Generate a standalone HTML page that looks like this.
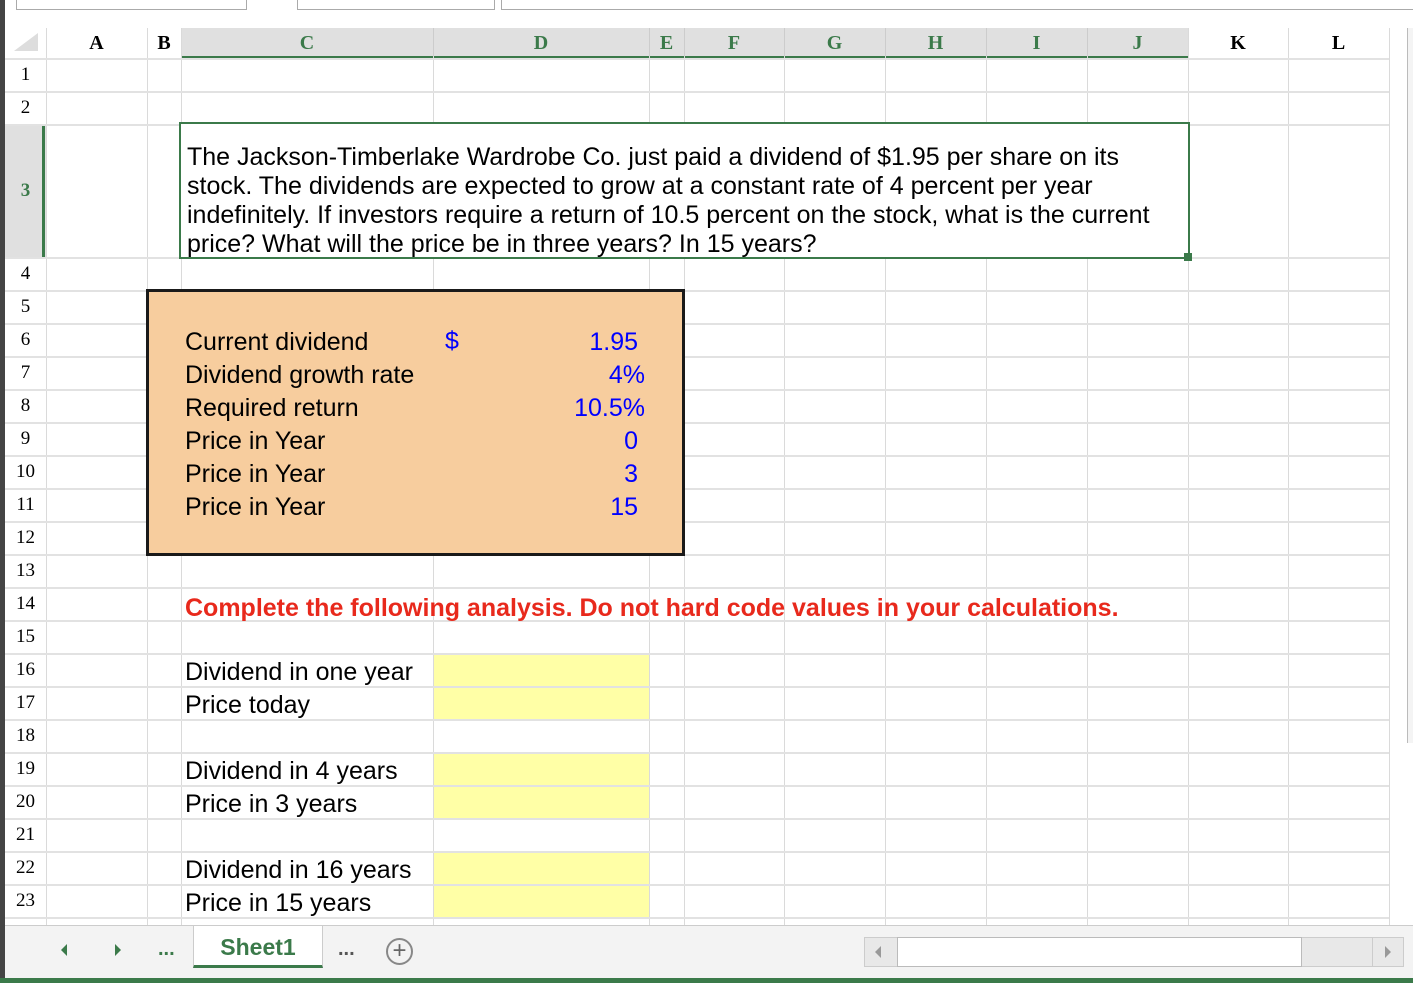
<!DOCTYPE html><html><head><style>
body{margin:0;width:1413px;height:983px;background:#fff;position:relative;overflow:hidden;font-family:"Liberation Sans",Arial,sans-serif}
div{position:absolute;box-sizing:border-box}
.v{width:1px;top:28px;height:897px;background:#dadada}
.h{height:2px;left:5px;width:1384px;background:#e2e2e2}
.ch{top:28px;height:30px;font-family:"Liberation Serif",serif;font-weight:bold;font-size:20px;text-align:center;line-height:30px}
.rh{left:5px;width:41px;text-align:center;font-family:"Liberation Serif",serif;font-size:19px;height:33px;line-height:33px}
.t{font-size:25px;color:#000;white-space:nowrap;line-height:29px}
.b{color:#0000ff}
</style></head><body>
<div style="left:0;top:0;width:5px;height:983px;background:#444"></div>
<div style="left:16px;top:0;width:231px;height:10px;border:1px solid #aaa;border-top:none"></div>
<div style="left:297px;top:0;width:198px;height:10px;border:1px solid #aaa;border-top:none"></div>
<div style="left:501px;top:0;width:912px;height:10px;border:1px solid #aaa;border-top:none;border-right:none"></div>
<div style="left:5px;top:28px;width:1384px;height:30px;background:#fff"></div>
<div style="left:181px;top:28px;width:1007px;height:30px;background:#e0e0e0"></div>
<div style="left:181px;top:56px;width:1007px;height:3px;background:#3b7a4a"></div>
<div style="left:14px;top:33px;width:0;height:0;border-left:24px solid transparent;border-bottom:18px solid #ddd"></div>
<div style="left:5px;top:124px;width:41px;height:133px;background:#e0e0e0"></div>
<div style="left:42px;top:124px;width:3px;height:133px;background:#3b7a4a"></div>
<div style="left:433px;top:653px;width:216px;height:66px;background:#ffffa6"></div>
<div style="left:433px;top:752px;width:216px;height:66px;background:#ffffa6"></div>
<div style="left:433px;top:851px;width:216px;height:66px;background:#ffffa6"></div>
<div class="v" style="left:46px"></div><div class="v" style="left:147px"></div><div class="v" style="left:181px"></div><div class="v" style="left:433px"></div><div class="v" style="left:649px"></div><div class="v" style="left:684px"></div><div class="v" style="left:784px"></div><div class="v" style="left:885px"></div><div class="v" style="left:986px"></div><div class="v" style="left:1087px"></div><div class="v" style="left:1188px"></div><div class="v" style="left:1288px"></div><div class="v" style="left:1389px"></div>
<div class="h" style="top:58px"></div><div class="h" style="top:91px"></div><div class="h" style="top:124px"></div><div class="h" style="top:257px"></div><div class="h" style="top:290px"></div><div class="h" style="top:323px"></div><div class="h" style="top:356px"></div><div class="h" style="top:389px"></div><div class="h" style="top:422px"></div><div class="h" style="top:455px"></div><div class="h" style="top:488px"></div><div class="h" style="top:521px"></div><div class="h" style="top:554px"></div><div class="h" style="top:587px"></div><div class="h" style="top:620px"></div><div class="h" style="top:653px"></div><div class="h" style="top:686px"></div><div class="h" style="top:719px"></div><div class="h" style="top:752px"></div><div class="h" style="top:785px"></div><div class="h" style="top:818px"></div><div class="h" style="top:851px"></div><div class="h" style="top:884px"></div><div class="h" style="top:917px"></div>
<div class="ch" style="left:46px;width:101px">A</div><div class="ch" style="left:147px;width:34px">B</div>
<div class="ch" style="left:181px;width:252px;color:#3b7a4a">C</div><div class="ch" style="left:433px;width:216px;color:#3b7a4a">D</div><div class="ch" style="left:649px;width:35px;color:#3b7a4a">E</div><div class="ch" style="left:684px;width:100px;color:#3b7a4a">F</div><div class="ch" style="left:784px;width:101px;color:#3b7a4a">G</div><div class="ch" style="left:885px;width:101px;color:#3b7a4a">H</div><div class="ch" style="left:986px;width:101px;color:#3b7a4a">I</div><div class="ch" style="left:1087px;width:101px;color:#3b7a4a">J</div><div class="ch" style="left:1188px;width:100px">K</div><div class="ch" style="left:1288px;width:101px">L</div>
<div style="left:433px;top:28px;width:1px;height:28px;background:#ccc"></div><div style="left:649px;top:28px;width:1px;height:28px;background:#ccc"></div><div style="left:684px;top:28px;width:1px;height:28px;background:#ccc"></div><div style="left:784px;top:28px;width:1px;height:28px;background:#ccc"></div><div style="left:885px;top:28px;width:1px;height:28px;background:#ccc"></div><div style="left:986px;top:28px;width:1px;height:28px;background:#ccc"></div><div style="left:1087px;top:28px;width:1px;height:28px;background:#ccc"></div>
<div class="rh" style="top:58px">1</div><div class="rh" style="top:91px">2</div><div class="rh" style="top:124px;height:133px;line-height:133px;color:#3b7a4a;font-weight:bold">3</div>
<div class="rh" style="top:257px">4</div><div class="rh" style="top:290px">5</div><div class="rh" style="top:323px">6</div><div class="rh" style="top:356px">7</div><div class="rh" style="top:389px">8</div><div class="rh" style="top:422px">9</div><div class="rh" style="top:455px">10</div><div class="rh" style="top:488px">11</div><div class="rh" style="top:521px">12</div><div class="rh" style="top:554px">13</div><div class="rh" style="top:587px">14</div><div class="rh" style="top:620px">15</div><div class="rh" style="top:653px">16</div><div class="rh" style="top:686px">17</div><div class="rh" style="top:719px">18</div><div class="rh" style="top:752px">19</div><div class="rh" style="top:785px">20</div><div class="rh" style="top:818px">21</div><div class="rh" style="top:851px">22</div><div class="rh" style="top:884px">23</div>
<div style="left:179px;top:122px;width:1011px;height:137px;border:2px solid #3b7a4a;background:#fff"></div>
<div style="left:1184px;top:253px;width:8px;height:8px;background:#3b7a4a"></div>
<div class="t" style="left:187px;top:143px">The Jackson-Timberlake Wardrobe Co. just paid a dividend of $1.95 per share on its<br>stock. The dividends are expected to grow at a constant rate of 4 percent per year<br>indefinitely. If investors require a return of 10.5 percent on the stock, what is the current<br>price? What will the price be in three years? In 15 years?</div>
<div style="left:146px;top:289px;width:539px;height:267px;border:3px solid #1a1a1a;background:#f7cd9e"></div>
<div class="t" style="left:185px;top:326px;line-height:33px">Current dividend<br>Dividend growth rate<br>Required return<br>Price in Year<br>Price in Year<br>Price in Year</div>
<div class="t b" style="left:445px;top:327px">$</div>
<div class="t b" style="left:480px;top:326px;width:165px;text-align:right;line-height:33px">1.95&nbsp;<br>4%<br>10.5%<br>0&nbsp;<br>3&nbsp;<br>15&nbsp;</div>
<div class="t" style="left:185px;top:594px;color:#e8291c;font-weight:bold;font-size:25px">Complete the following analysis. Do not hard code values in your calculations.</div>
<div class="t" style="left:185px;top:656px;line-height:33px">Dividend in one year<br>Price today</div>
<div class="t" style="left:185px;top:755px;line-height:33px">Dividend in 4 years<br>Price in 3 years</div>
<div class="t" style="left:185px;top:854px;line-height:33px">Dividend in 16 years<br>Price in 15 years</div>
<div style="left:1407px;top:28px;width:6px;height:715px;border-left:1px solid #bbb;background:#f4f4f4"></div>
<div style="left:5px;top:925px;width:1408px;height:53px;background:#f3f3f3;border-top:1px solid #ccc"></div>
<div style="left:61px;top:944px;width:0;height:0;border-top:6px solid transparent;border-bottom:6px solid transparent;border-right:6px solid #3b7a4a"></div>
<div style="left:115px;top:944px;width:0;height:0;border-top:6px solid transparent;border-bottom:6px solid transparent;border-left:6px solid #3b7a4a"></div>
<div style="left:158px;top:938px;font-size:20px;font-weight:bold;color:#3b7a4a">...</div>
<div style="left:193px;top:926px;width:130px;height:42px;background:#fff;border-left:1px solid #ccc;border-right:1px solid #ccc;border-bottom:3px solid #3b7a4a;text-align:center;line-height:42px;font-size:23px;font-weight:bold;color:#3b7a4a">Sheet1</div>
<div style="left:338px;top:938px;font-size:20px;font-weight:bold;color:#555">...</div>
<div style="left:386px;top:938px;width:27px;height:27px;border:2px solid #888;border-radius:50%;text-align:center;line-height:22px;font-size:24px;color:#666">+</div>
<div style="left:864px;top:937px;width:540px;height:30px;border:1px solid #ccc;background:#e8e8e8"></div>
<div style="left:897px;top:937px;width:405px;height:30px;border:1px solid #bbb;background:#fff"></div>
<div style="left:875px;top:946px;width:0;height:0;border-top:6px solid transparent;border-bottom:6px solid transparent;border-right:6px solid #999"></div>
<div style="left:1385px;top:946px;width:0;height:0;border-top:6px solid transparent;border-bottom:6px solid transparent;border-left:6px solid #999"></div>
<div style="left:1372px;top:937px;width:1px;height:30px;background:#ccc"></div>
<div style="left:0;top:978px;width:1413px;height:5px;background:#3b7a4a"></div>
</body></html>
